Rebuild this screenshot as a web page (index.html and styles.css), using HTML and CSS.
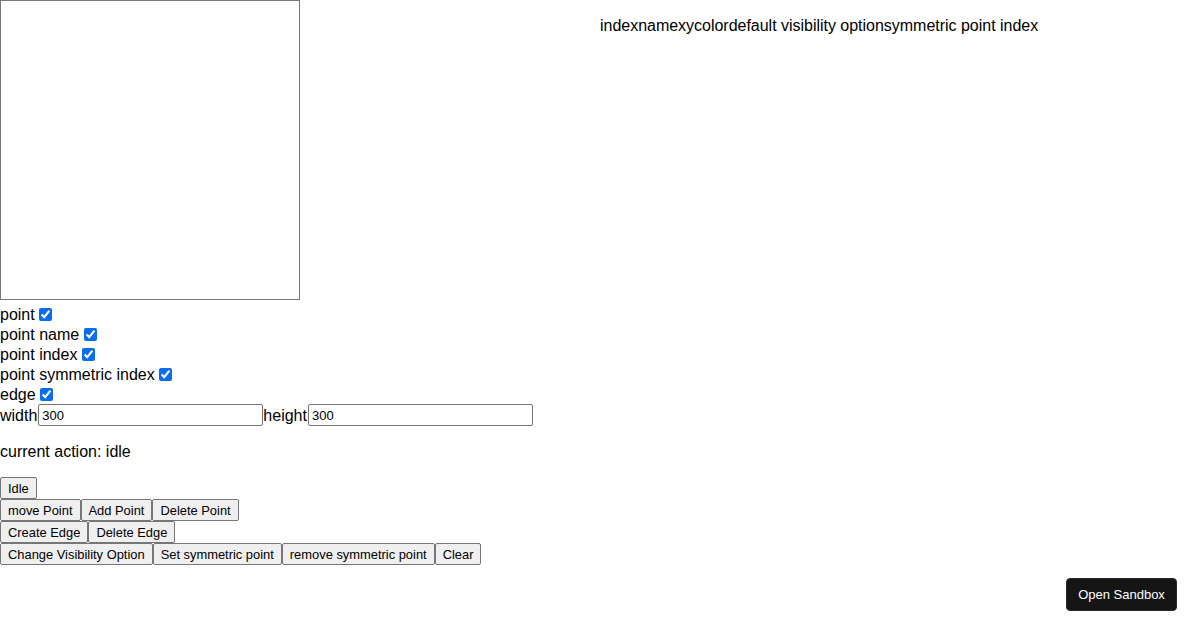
FILE: index.html
```html
<!DOCTYPE html>
<html>
<head>
<meta charset="utf-8">
<link rel="stylesheet" href="styles.css">
</head>
<body>
<div class="app">
  <div class="left">
    <div class="canvas-wrap"><div class="canvas"></div></div>
    <div class="opt">point <input type="checkbox" checked></div>
    <div class="opt">point name <input type="checkbox" checked></div>
    <div class="opt">point index <input type="checkbox" checked></div>
    <div class="opt">point symmetric index <input type="checkbox" checked></div>
    <div class="opt">edge <input type="checkbox" checked></div>
    <div class="size"><span class="lbl">width</span><input class="num" type="text" value="300"><span class="lbl">height</span><input class="num" type="text" value="300"></div>
    <p class="action">current action: idle</p>
    <div class="btns"><button>Idle</button></div>
    <div class="btns"><button>move Point</button><button>Add Point</button><button>Delete Point</button></div>
    <div class="btns"><button>Create Edge</button><button>Delete Edge</button></div>
    <div class="btns"><button>Change Visibility Option</button><button>Set symmetric point</button><button>remove symmetric point</button><button>Clear</button></div>
  </div>
  <div class="right">
    <div class="thead"><span>index</span><span>name</span><span>x</span><span>y</span><span>color</span><span>default visibility option</span><span>symmetric point index</span></div>
  </div>
</div>
<button class="sandbox">Open Sandbox</button>
</body>
</html>
```

FILE: styles.css
```css
html, body {
  margin: 0;
  padding: 0;
  background: #fff;
}
body {
  font-family: "Liberation Sans", Arial, sans-serif;
  font-size: 16px;
  color: #000;
}
.app {
  display: flex;
}
.left {
  width: 600px;
}
.right {
  flex: 1;
  padding-top: 17px;
}
.thead {
  display: flex;
  letter-spacing: -0.02px;
}
.canvas-wrap {
  height: 304px;
}
.canvas {
  width: 300px;
  height: 300px;
  box-sizing: border-box;
  border: 1px solid #7a7a7a;
}
.opt {
  box-sizing: border-box;
  height: 20px;
  padding-top: 1px;
  line-height: 20px;
}
.opt input {
  margin: 0 3px 0 0;
  width: 13px;
  height: 13px;
  vertical-align: -1px;
  accent-color: #0b6cf2;
}
.size {
  height: 22px;
  display: flex;
  align-items: flex-start;
}
.lbl {
  padding: 3px 1px 0 0;
}
.num {
  box-sizing: border-box;
  width: 225px;
  height: 22px;
  margin: 0;
  padding: 1px 3px;
  border: 1px solid #767676;
  border-radius: 2px;
  font-family: "Liberation Sans", Arial, sans-serif;
  font-size: 13px;
}
.action {
  margin: 17px 0 16px;
}
.btns {
  height: 22px;
  display: flex;
}
.btns button {
  box-sizing: border-box;
  height: 22px;
  margin: 0;
  padding: 1px 7px;
  background: #efefef;
  border: 1px solid #767676;
  border-radius: 2px;
  font-family: "Liberation Sans", Arial, sans-serif;
  font-size: 12.9px;
  color: #000;
}
.sandbox {
  position: fixed;
  right: 23px;
  bottom: 19px;
  width: 111px;
  height: 33px;
  background: #151515;
  color: #fff;
  border: 1px solid #2a2a2a;
  border-radius: 4px;
  font-family: "Liberation Sans", Arial, sans-serif;
  font-size: 13px;
  padding: 0;
}
```
